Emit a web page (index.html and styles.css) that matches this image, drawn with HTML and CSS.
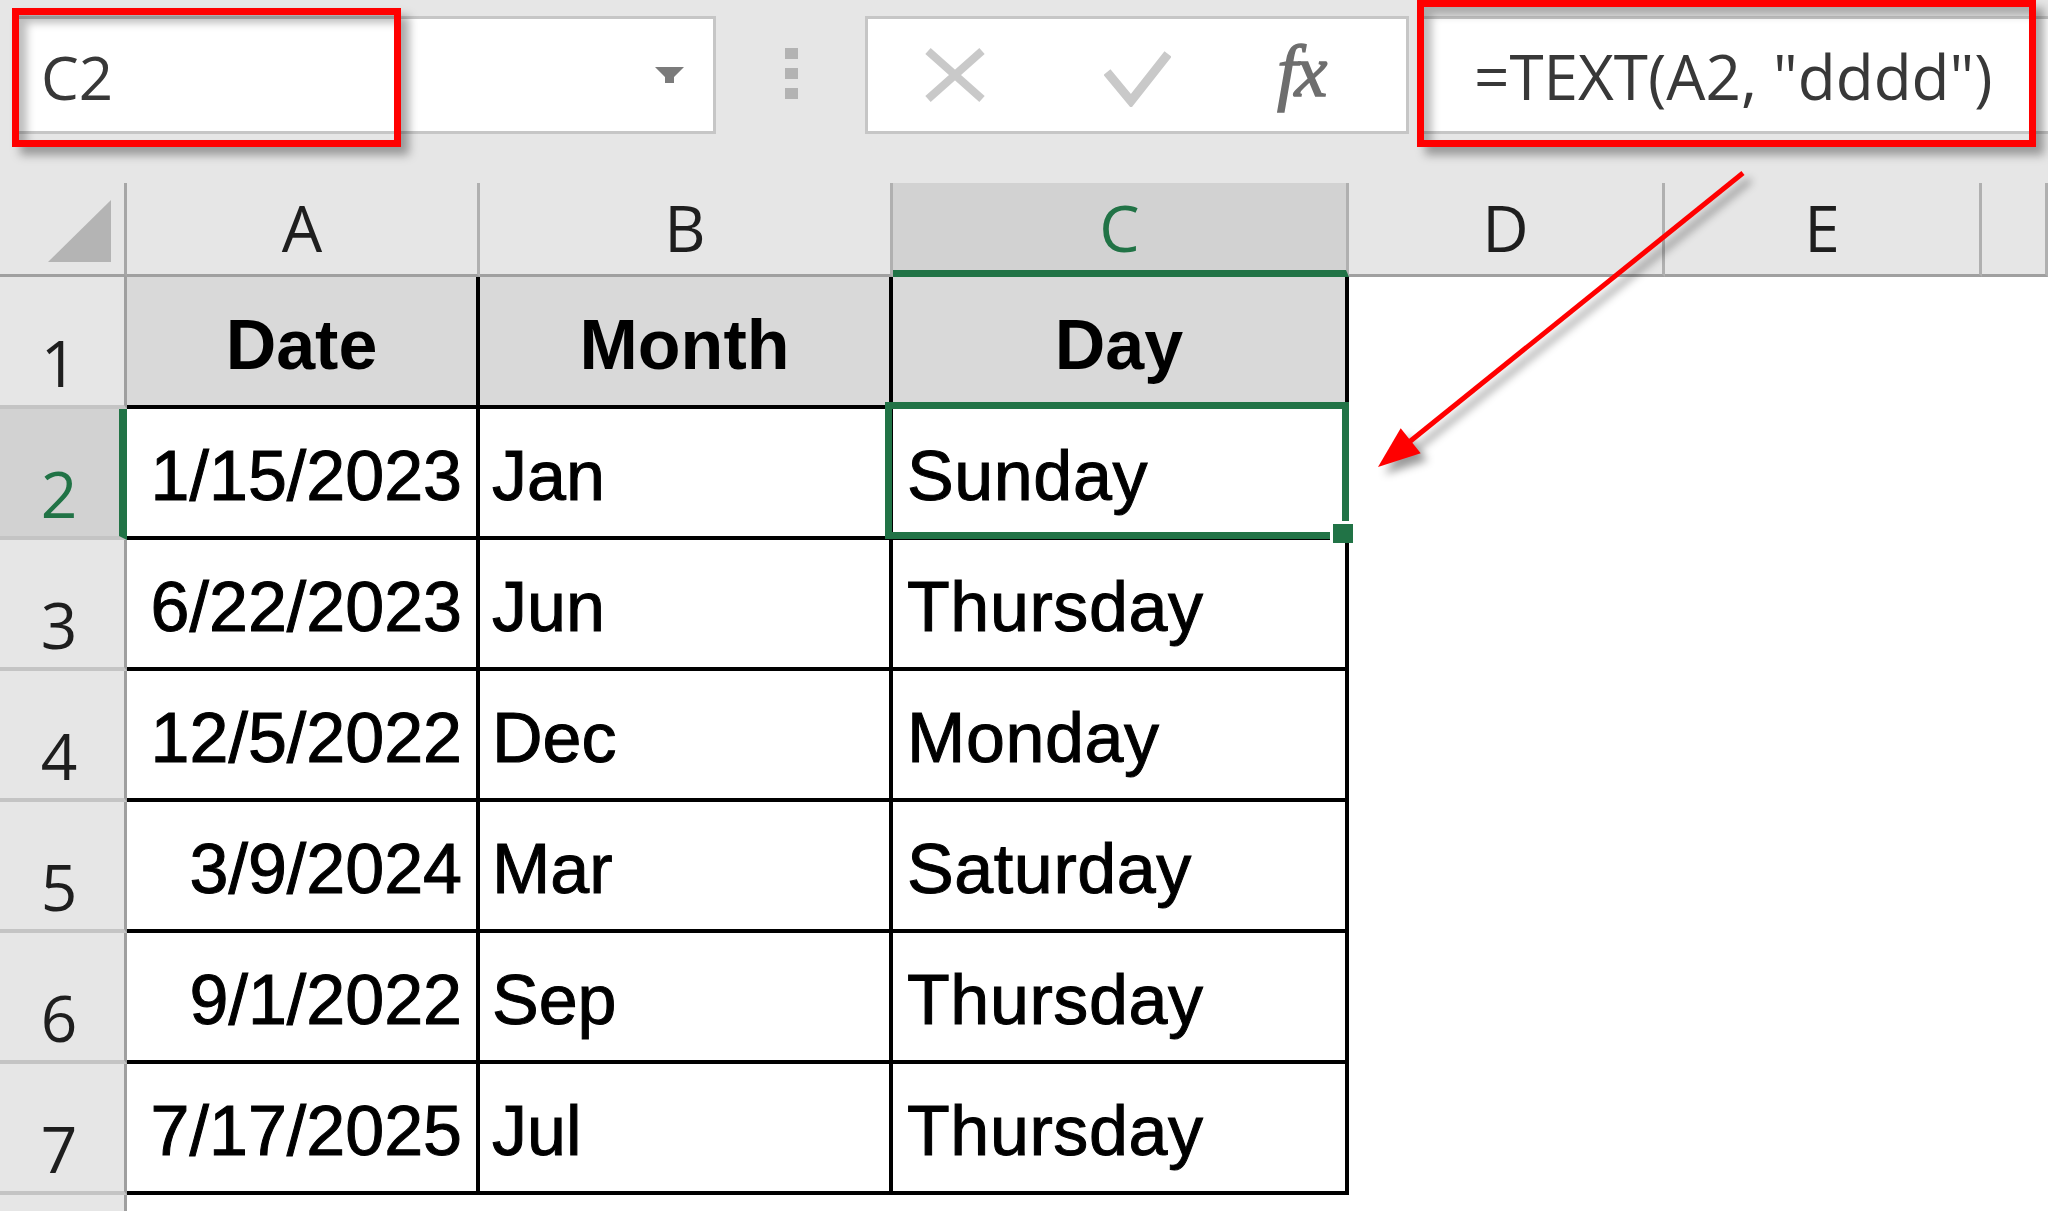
FILE: index.html
```html
<!DOCTYPE html>
<html>
<head>
<meta charset="utf-8">
<title>Excel TEXT dddd</title>
<link rel="stylesheet" href="styles.css">
</head>
<body>
<div class="app">
  <div class="fbar">
    <div class="namebox">
      <span class="nb-text">C2</span>
      <svg class="nb-arrow" width="29" height="16" viewBox="0 0 29 16"><polygon points="0,0 29,0 19,10 19,16 10,16 10,10" fill="#7b7b7b"/></svg>
    </div>
    <div class="grip"><i></i><i></i><i></i></div>
    <div class="fbtns">
      <svg class="ic-x" width="60" height="54" viewBox="0 0 60 54"><path d="M3 3 L57 51 M57 3 L3 51" stroke="#c9c9c9" stroke-width="8" fill="none"/></svg>
      <svg class="ic-check" width="67" height="57" viewBox="0 0 67 57"><path d="M3 22 L27 51 L64 4" stroke="#c9c9c9" stroke-width="9" fill="none"/></svg>
      <span class="ic-fx">fx</span>
    </div>
    <div class="finput">=TEXT(A2, "dddd")</div>
  </div>

  <div class="sheet">
    <div class="corner"><svg width="63" height="62" viewBox="0 0 63 62"><polygon points="63,0 63,62 0,62" fill="#b4b4b4"/></svg></div>
    <div class="ch">A</div>
    <div class="ch">B</div>
    <div class="ch sel">C</div>
    <div class="ch">D</div>
    <div class="ch">E</div>
    <div class="ch"></div>

    <div class="rh">1</div>
    <div class="c t hd">Date</div>
    <div class="c t hd">Month</div>
    <div class="c t hd">Day</div>
    <div class="c"></div><div class="c"></div><div class="c"></div>

    <div class="rh sel">2</div>
    <div class="c t num">1/15/2023</div>
    <div class="c t txt">Jan</div>
    <div class="c t txt day active">Sunday<span class="handle"></span></div>
    <div class="c"></div><div class="c"></div><div class="c"></div>

    <div class="rh">3</div>
    <div class="c t num">6/22/2023</div>
    <div class="c t txt">Jun</div>
    <div class="c t txt day">Thursday</div>
    <div class="c"></div><div class="c"></div><div class="c"></div>

    <div class="rh">4</div>
    <div class="c t num">12/5/2022</div>
    <div class="c t txt">Dec</div>
    <div class="c t txt day">Monday</div>
    <div class="c"></div><div class="c"></div><div class="c"></div>

    <div class="rh">5</div>
    <div class="c t num">3/9/2024</div>
    <div class="c t txt">Mar</div>
    <div class="c t txt day">Saturday</div>
    <div class="c"></div><div class="c"></div><div class="c"></div>

    <div class="rh">6</div>
    <div class="c t num">9/1/2022</div>
    <div class="c t txt">Sep</div>
    <div class="c t txt day">Thursday</div>
    <div class="c"></div><div class="c"></div><div class="c"></div>

    <div class="rh">7</div>
    <div class="c t num">7/17/2025</div>
    <div class="c t txt">Jul</div>
    <div class="c t txt day">Thursday</div>
    <div class="c"></div><div class="c"></div><div class="c"></div>

    <div class="rh last"></div>
    <div class="c"></div><div class="c"></div><div class="c"></div>
    <div class="c"></div><div class="c"></div><div class="c"></div>
  </div>

  <div class="callout callout-name"></div>
  <div class="callout callout-formula"></div>
  <svg class="arrow" width="400" height="320" viewBox="0 0 400 320">
    <line x1="383" y1="13" x2="48" y2="283" stroke="#ff0000" stroke-width="5"/>
    <polygon points="18,307 60.7,293.2 40.7,268.2" fill="#ff0000"/>
  </svg>
</div>
</body>
</html>
```

FILE: styles.css
```css
html, body {
  margin: 0;
  padding: 0;
}
body {
  width: 2048px;
  height: 1211px;
  overflow: hidden;
  background: #e6e6e6;
}
.app {
  position: relative;
  width: 2048px;
  height: 1211px;
  overflow: hidden;
}

/* formula bar */
.fbar {
  box-sizing: border-box;
  height: 183px;
  padding-top: 16px;
  display: flex;
  align-items: flex-start;
}
.namebox {
  box-sizing: border-box;
  margin-left: 16px;
  width: 700px;
  height: 118px;
  border: 3px solid #c6c6c6;
  background: #ffffff;
  display: flex;
  align-items: center;
  justify-content: space-between;
  padding: 0 29px 0 22px;
}
.nb-text {
  font-family: "Open Sans", sans-serif;
  font-size: 60px;
  line-height: 60px;
  color: #383838;
  position: relative;
  top: 2px;
}
.grip {
  margin-left: 69px;
  padding-top: 32px;
  display: flex;
  flex-direction: column;
  gap: 9px;
}
.grip i {
  display: block;
  width: 13px;
  height: 11px;
  background: #b3b3b3;
}
.fbtns {
  box-sizing: border-box;
  margin-left: 67px;
  width: 544px;
  height: 118px;
  border: 3px solid #c6c6c6;
  background: #ffffff;
  display: flex;
  align-items: center;
  padding-left: 57px;
}
.ic-check {
  margin-left: 119px;
  position: relative;
  top: 3px;
}
.ic-fx {
  margin-left: 106px;
  font-family: "Liberation Serif", serif;
  font-style: italic;
  font-size: 74px;
  line-height: 74px;
  letter-spacing: -3px;
  color: #6e6e6e;
  -webkit-text-stroke: 1.5px #6e6e6e;
  position: relative;
  top: -4px;
}
.finput {
  box-sizing: border-box;
  margin-left: 8px;
  flex: 1;
  height: 118px;
  border: 3px solid #c6c6c6;
  border-right: none;
  background: #ffffff;
  font-family: "Open Sans", sans-serif;
  font-size: 62px;
  color: #383838;
  display: flex;
  align-items: center;
  padding-left: 54px;
  padding-top: 2px;
  white-space: pre;
}

/* sheet */
.sheet {
  display: grid;
  grid-template-columns: 127px 353px 413px 456px 316px 317px 66px;
  grid-template-rows: 94px 132px repeat(6, 131px) 16px;
}
.corner {
  box-sizing: border-box;
  background: #e6e6e6;
  border-right: 3px solid #a6a6a6;
  border-bottom: 3px solid #a0a0a0;
  display: flex;
  align-items: flex-end;
  justify-content: flex-end;
  padding: 0 13px 12px 0;
}
.ch {
  box-sizing: border-box;
  background: #e6e6e6;
  border-right: 3px solid #b0b0b0;
  border-bottom: 3px solid #a0a0a0;
  display: flex;
  align-items: flex-end;
  justify-content: center;
  padding-bottom: 14px;
  font-family: "Open Sans", sans-serif;
  font-size: 64px;
  line-height: 64px;
  color: #1e1e1e;
}
.ch.sel {
  background: #d2d2d2;
  border-bottom: 7px solid #217346;
  padding-bottom: 10px;
  color: #217346;
}
.rh {
  box-sizing: border-box;
  background: #e6e6e6;
  border-right: 3px solid #9f9f9f;
  border-bottom: 4px solid #c4c4c4;
  display: flex;
  align-items: flex-end;
  justify-content: center;
  padding: 0 6px 10px 0;
  font-family: "Open Sans", sans-serif;
  font-size: 64px;
  line-height: 64px;
  color: #1e1e1e;
}
.rh.sel {
  background: #d2d2d2;
  border-right: 8px solid #217346;
  padding-right: 1px;
  color: #217346;
}
.rh.last {
  border-bottom: none;
}
.c {
  box-sizing: border-box;
  background: #ffffff;
  display: flex;
  align-items: flex-end;
  padding-bottom: 25px;
  font-family: "Liberation Sans", Arial, sans-serif;
  font-size: 70px;
  line-height: 70px;
  color: #000000;
  white-space: nowrap;
  -webkit-text-stroke: 1px #000000;
}
.c.t {
  border-right: 4px solid #000000;
  border-bottom: 4px solid #000000;
}
.c.hd {
  background: #d9d9d9;
  font-weight: bold;
  justify-content: center;
  -webkit-text-stroke: 0;
}
.c.num {
  justify-content: flex-end;
  padding-right: 14px;
}
.c.txt {
  padding-left: 12px;
}
.c.day {
  padding-left: 14px;
  letter-spacing: 0.6px;
}
.c.active {
  position: relative;
}
.c.active::after {
  content: "";
  position: absolute;
  top: -7px;
  left: -8px;
  right: -4px;
  bottom: -3px;
  border: 7px solid #217346;
  pointer-events: none;
}
.handle {
  position: absolute;
  right: -8px;
  bottom: -7px;
  width: 20px;
  height: 19px;
  background: #217346;
  border-left: 3px solid #ffffff;
  border-top: 3px solid #ffffff;
  z-index: 2;
}

/* annotations */
.callout {
  position: absolute;
  box-sizing: border-box;
  border: 7px solid #ff0000;
  box-shadow: 8px 8px 9px rgba(0, 0, 0, 0.34), inset 8px 8px 9px rgba(0, 0, 0, 0.26);
}
.callout-name {
  left: 12px;
  top: 8px;
  width: 389px;
  height: 139px;
}
.callout-formula {
  left: 1417px;
  top: 0;
  width: 619px;
  height: 147px;
}
.arrow {
  position: absolute;
  left: 1360px;
  top: 160px;
  filter: drop-shadow(7px 7px 4px rgba(0, 0, 0, 0.4));
}
```
